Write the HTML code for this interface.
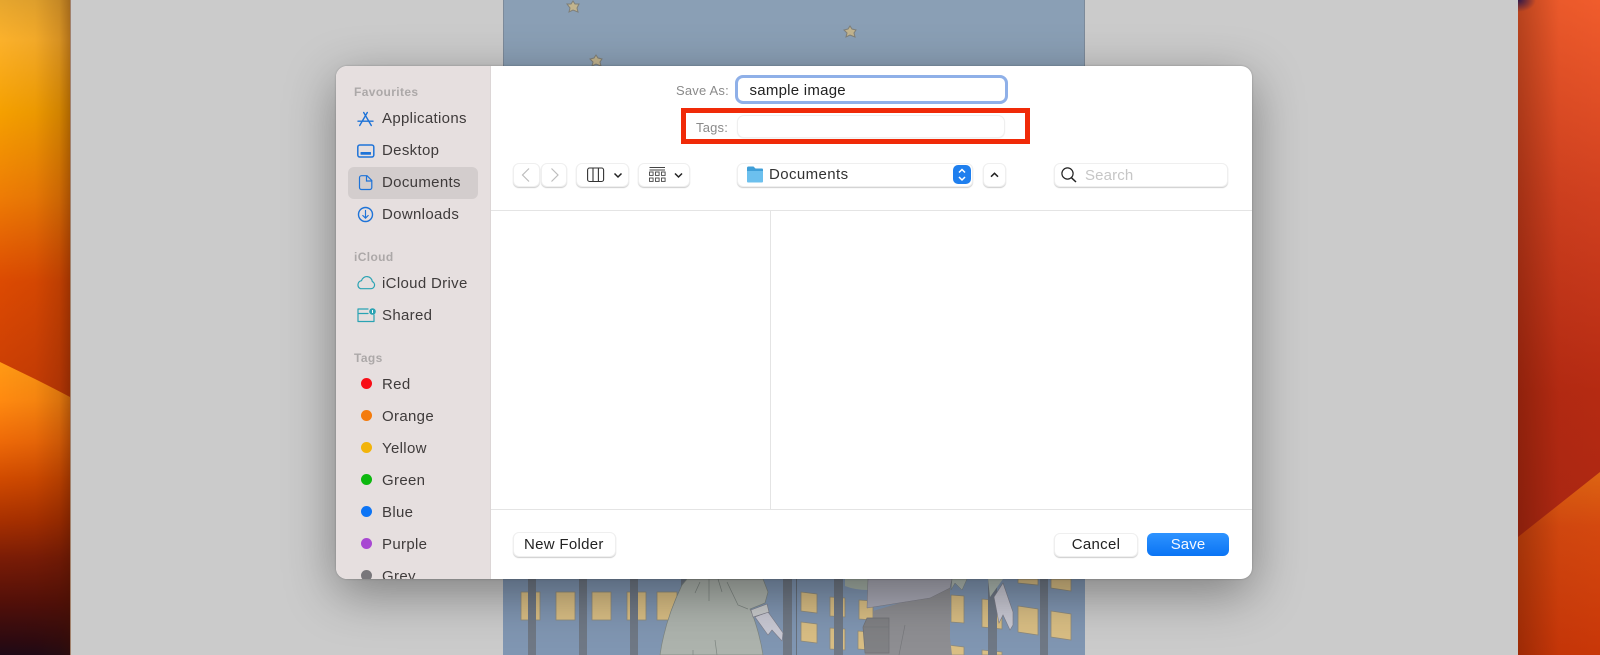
<!DOCTYPE html>
<html><head><meta charset="utf-8"><title>Save dialog</title>
<style>
html,body{margin:0;padding:0;width:1600px;height:655px;overflow:hidden;background:#cbcbcb}
body{position:relative;font-family:"Liberation Sans",sans-serif}
#all{position:absolute;left:0;top:0;width:1600px;height:655px;overflow:hidden;filter:blur(.35px)}
svg.l{position:absolute;left:0;top:0}
.t{position:absolute;white-space:nowrap;font-size:15px;line-height:20px;letter-spacing:.33px;color:#3f3b3b;margin-top:1px}
.h{position:absolute;white-space:nowrap;font-size:12px;line-height:16px;left:354px;font-weight:bold;letter-spacing:.38px;color:#aca8a8}
.s{left:382px}
.b{position:absolute;box-sizing:border-box;background:#fff;border:1px solid #efefef;border-radius:6px;box-shadow:0 1px 1px rgba(0,0,0,.2)}
.d{position:absolute;left:360.5px;width:11px;height:11px;border-radius:50%}
#dlg{position:absolute;left:336px;top:66px;width:916px;height:513px;border-radius:11px;background:#fff;box-shadow:0 14px 50px rgba(0,0,0,.38),0 0 2px rgba(0,0,0,.25)}
#side{position:absolute;left:0;top:0;width:155px;height:513px;background:#e6dfdf;border-radius:11px 0 0 11px;border-right:1px solid #dcd6d6;box-sizing:border-box}
#clip{position:absolute;left:0;top:0;width:1600px;height:579px;overflow:hidden}
</style></head><body><div id="all">
<svg class="l" width="1600" height="655" viewBox="0 0 1600 655">
<defs>
<linearGradient id="lw" gradientUnits="userSpaceOnUse" x1="0" y1="0" x2="0" y2="655"><stop offset="0" stop-color="#e6a62e"/><stop offset=".06" stop-color="#fbb12b"/><stop offset=".17" stop-color="#f5a000"/><stop offset=".3" stop-color="#ee7c05"/><stop offset=".43" stop-color="#dc4a02"/><stop offset=".6" stop-color="#c83c05"/></linearGradient>
<linearGradient id="lw2" gradientUnits="userSpaceOnUse" x1="0" y1="362" x2="0" y2="655"><stop offset="0" stop-color="#ff9a14"/><stop offset=".13" stop-color="#ff8a10"/><stop offset=".27" stop-color="#ee6a08"/><stop offset=".4" stop-color="#d04a00"/><stop offset=".54" stop-color="#a83000"/><stop offset=".67" stop-color="#7a1c06"/><stop offset=".81" stop-color="#551008"/><stop offset=".95" stop-color="#2d0a10"/><stop offset="1" stop-color="#1e0a16"/></linearGradient>
<linearGradient id="edgeL" x1="0" y1="0" x2="1" y2="0"><stop offset="0" stop-color="#401000" stop-opacity="0"/><stop offset=".5" stop-color="#401000" stop-opacity=".05"/><stop offset=".85" stop-color="#401000" stop-opacity=".2"/><stop offset="1" stop-color="#401000" stop-opacity=".4"/></linearGradient>
<linearGradient id="rw" x1="0" y1="0" x2="0" y2="1"><stop offset="0" stop-color="#f05c2c"/><stop offset=".3" stop-color="#d0401f"/><stop offset=".6" stop-color="#b52a12"/><stop offset="1" stop-color="#a42412"/></linearGradient>
<linearGradient id="rw2" gradientUnits="userSpaceOnUse" x1="0" y1="472" x2="0" y2="655"><stop offset="0" stop-color="#dd6412"/><stop offset=".3" stop-color="#d4480f"/><stop offset="1" stop-color="#c83608"/></linearGradient>
<linearGradient id="edgeR" x1="0" y1="0" x2="1" y2="0"><stop offset="0" stop-color="#401000" stop-opacity=".32"/><stop offset=".5" stop-color="#401000" stop-opacity=".03"/><stop offset="1" stop-color="#401000" stop-opacity="0"/></linearGradient>
<radialGradient id="pc" cx="0" cy="0" r="1"><stop offset="0" stop-color="#30184a"/><stop offset="1" stop-color="#30184a" stop-opacity="0"/></radialGradient>
</defs>
<rect x="0" y="0" width="70" height="655" fill="url(#lw)"/>
<path d="M0 362 L35 379 Q55 389 70 397 V655 H0Z" fill="url(#lw2)"/>
<rect x="0" y="0" width="70" height="655" fill="url(#edgeL)"/>
<rect x="70" y="0" width="1" height="655" fill="#7a3a10" opacity=".5"/>
<rect x="1518" y="0" width="82" height="655" fill="url(#rw)"/>
<path d="M1518 537 L1600 472 V655 H1518Z" fill="url(#rw2)"/>
<rect x="1518" y="0" width="82" height="655" fill="url(#edgeR)"/>
<rect x="1518" y="0" width="18" height="12" fill="url(#pc)"/>
<rect x="503" y="0" width="582" height="655" fill="#8a9fb5"/>
<rect x="503" y="0" width="1" height="655" fill="#7c8a9a"/>
<rect x="1084" y="0" width="1" height="655" fill="#7c8a9a"/>
<rect x="503" y="579" width="582" height="76" fill="#8096b2"/>
<g fill="#c2b48e" stroke="#7f7f78" stroke-width="1">
<polygon points="573,1 575,4 579,4 577,8 578,12 573,10 569,12 570,8 567,4 571,4"/>
<polygon points="850,26 852,29 856,30 854,33 855,37 850,35 846,37 847,33 844,30 848,29"/>
<polygon points="596,55 598,58 602,59 600,62 601,66 596,64 592,66 593,62 590,59 594,58"/>
</g>
<g fill="#d9be84" stroke="#8d8a7c" stroke-width=".8">
<rect x="521" y="592" width="19" height="28"/><rect x="556" y="592" width="19" height="28"/><rect x="592" y="592" width="19" height="28"/><rect x="627" y="592" width="19" height="28"/><rect x="657" y="592" width="20" height="28"/>
<polygon points="801,592 817,594 817,613 801,611"/><polygon points="801,622 817,624 817,643 801,641"/>
<polygon points="830,597 845,598 845,617 830,616"/><polygon points="830,628 845,629 845,650 830,649"/>
<polygon points="859,600 873,601 873,620 859,619"/><polygon points="858,631 870,632 870,650 858,649"/>
<polygon points="951,595 964,596 964,623 951,622"/><polygon points="982,599 1002,601 1002,629 982,627"/>
<polygon points="1018,606 1038,609 1038,635 1018,632"/><polygon points="1051,611 1071,614 1071,640 1051,637"/>
<polygon points="1018,579 1038,579 1038,585 1018,583"/><polygon points="1051,579 1071,579 1071,591 1051,588"/>
<polygon points="948,645 964,647 964,655 948,655"/><polygon points="982,650 1002,652 1002,655 982,655"/>
</g>
<g fill="#6f7885">
<rect x="528" y="579" width="8" height="76"/><rect x="579" y="579" width="8" height="76"/><rect x="630" y="579" width="8" height="76"/><rect x="681" y="579" width="7" height="12"/>
<rect x="783" y="579" width="9" height="76"/><rect x="834" y="579" width="9" height="76"/><rect x="988" y="579" width="9" height="76"/><rect x="1040" y="579" width="8" height="76"/>
</g>
<rect x="796" y="579" width="1" height="76" fill="#67707c"/>
<path d="M687 579 L682 585 Q665 620 660 655 H763 Q760 635 752 613 L750 609 L765 603 L768 592 L763 579Z" fill="#adb3ad" stroke="#7d8580" stroke-width=".7"/>
<path d="M700 582 L695 593 M709 579 V601 M718 579 L722 592 M727 582 L738 605 L748 609 M715 640 L717 655 M693 650 V655" stroke="#7d8580" stroke-width=".7" fill="none"/>
<path d="M755 617 L768 612 L783 633 L782 641 L772 630 L768 635Z" fill="#c9c9d4" stroke="#7d7d88" stroke-width=".6"/>
<path d="M751 610 L767 604 L769 612 L753 617Z" fill="#c9cbcc" stroke="#7d7d88" stroke-width=".6"/>
<path d="M845 579 H868 V590 Q855 590 845 586Z" fill="#a5b0a6"/>
<path d="M873 611 L950 588 V638 L952 655 H865 L873 620Z" fill="#8e8e92"/>
<path d="M868 579 L867 608 L930 598 L950 588 L952 579Z" fill="#a9a9b5" stroke="#7d7d88" stroke-width=".5"/>
<path d="M863 627 L867 618 L889 618 L889 653 L865 653Z" fill="#808184" stroke="#6f7074" stroke-width=".7"/>
<path d="M864 627 H889 M905 625 L899 655" stroke="#77787c" stroke-width=".7" fill="none"/>
<path d="M952 579 H967 L962 590 L955 583 L951 590Z" fill="#b0bab3" stroke="#7d8580" stroke-width=".5"/>
<path d="M988 579 H1003 L990 597Z" fill="#b0bbb3"/>
<path d="M994 597 L1003 583 L1013 612 L1013 625 L1010 630 L1003 615 L999 623Z" fill="#c9c9d4" stroke="#7d7d88" stroke-width=".6"/>
</svg>
<div id="dlg"><div id="side"></div></div>
<div id="clip">
<div style="position:absolute;left:348px;top:167px;width:130px;height:32px;border-radius:6px;background:#d3cdcd"></div>
<div class="h" style="top:84px">Favourites</div>
<div class="t s" style="top:108px">Applications</div>
<div class="t s" style="top:140px">Desktop</div>
<div class="t s" style="top:172px">Documents</div>
<div class="t s" style="top:204px">Downloads</div>
<div class="h" style="top:249px">iCloud</div>
<div class="t s" style="top:273px">iCloud Drive</div>
<div class="t s" style="top:305px">Shared</div>
<div class="h" style="top:350px">Tags</div>
<div class="t s" style="top:374px">Red</div>
<div class="t s" style="top:406px">Orange</div>
<div class="t s" style="top:438px">Yellow</div>
<div class="t s" style="top:470px">Green</div>
<div class="t s" style="top:502px">Blue</div>
<div class="t s" style="top:534px">Purple</div>
<div class="t s" style="top:566px">Grey</div>
<div class="d" style="top:378px;background:#f80e17"></div>
<div class="d" style="top:410px;background:#f47b0c"></div>
<div class="d" style="top:442px;background:#f2b40a"></div>
<div class="d" style="top:474px;background:#0db80f"></div>
<div class="d" style="top:506px;background:#0c74f5"></div>
<div class="d" style="top:538px;background:#a848d2"></div>
<div class="d" style="top:570px;background:#78767a"></div>
</div>

<div style="position:absolute;left:491px;top:210px;width:761px;height:1px;background:#e4e4e4"></div>
<div style="position:absolute;left:491px;top:509px;width:761px;height:1px;background:#e4e4e4"></div>
<div style="position:absolute;left:770px;top:210px;width:1px;height:299px;background:#e4e4e4"></div>

<div class="t" style="left:676px;top:81px;font-size:13px;color:#8a8a8a;letter-spacing:.2px;margin-top:0">Save As:</div>
<div style="position:absolute;box-sizing:border-box;left:735px;top:75px;width:273px;height:29px;border:3px solid #8fb0e8;border-radius:8px;background:#fff"></div>
<div class="t" style="left:749.500px;top:80px;color:#222;letter-spacing:.25px">sample image</div>
<div class="t" style="left:696px;top:118px;font-size:13px;color:#8a8a8a;letter-spacing:.2px;margin-top:0">Tags:</div>
<div class="b" style="left:737px;top:115px;width:268px;height:23px;border-radius:7px;box-shadow:0 .5px 1px rgba(0,0,0,.08)"></div>
<div style="position:absolute;box-sizing:border-box;left:681px;top:108px;width:349px;height:36px;border:5px solid #f02a08"></div>

<div class="b" style="left:513px;top:163px;width:27px;height:24px"></div>
<div class="b" style="left:541px;top:163px;width:26px;height:24px"></div>
<div class="b" style="left:576px;top:163px;width:53px;height:24px"></div>
<div class="b" style="left:638px;top:163px;width:52px;height:24px"></div>
<div class="b" style="left:737px;top:163px;width:236px;height:24px"></div>
<div class="b" style="left:983px;top:163px;width:23px;height:24px"></div>
<div class="b" style="left:1054px;top:163px;width:174px;height:24px"></div>
<div style="position:absolute;left:953px;top:165px;width:18px;height:19px;border-radius:5px;background:#1f7fee"></div>
<div class="t" style="left:769px;top:164px;color:#333;letter-spacing:.4px">Documents</div>
<div class="t" style="left:1085px;top:165px;color:#c6c6c6;letter-spacing:.15px">Search</div>

<div class="b" style="left:513px;top:532px;width:103px;height:25px"></div>
<div class="t" style="left:524px;top:534px;color:#222;letter-spacing:.3px">New Folder</div>
<div class="b" style="left:1054px;top:533px;width:84px;height:24px"></div>
<div class="t" style="left:1054px;width:84px;text-align:center;top:534px;color:#222;letter-spacing:.3px">Cancel</div>
<div style="position:absolute;left:1147px;top:533px;width:82px;height:23px;border-radius:6px;background:linear-gradient(#2e93ff,#0a74f4)"></div>
<div class="t" style="left:1147px;width:82px;text-align:center;top:534px;color:#f4f8ff;letter-spacing:.1px">Save</div>

<svg class="l" width="1600" height="655" viewBox="0 0 1600 655" fill="none">
<g stroke="#1e73d8" stroke-width="1.4" stroke-linecap="round">
<path d="M363.700 112.500 L371.300 125.500 M367.300 112.500 L359.700 125.500 M358 121.200 H373"/>
<rect x="357.800" y="145" width="16" height="12" rx="2" stroke-width="1.500"/>
<rect x="360.500" y="152" width="10.500" height="2.800" rx=".5" fill="#1e73d8" stroke="none"/>
<path d="M361.500 175.700 H367 L371.800 180.500 V187.500 A2 2 0 0 1 369.800 189.500 H361.500 A2 2 0 0 1 359.500 187.500 V177.700 A2 2 0 0 1 361.500 175.700 Z M366.500 176 V181 H371.500" stroke-width="1.200"/>
<circle cx="365.500" cy="214.500" r="7"/>
<path d="M365.500 210.500 V218 M362.800 215.500 L365.500 218.200 L368.200 215.500" stroke-width="1.200"/>
</g>
<g stroke="#2aa3b3" stroke-width="1.200" stroke-linecap="round" stroke-linejoin="round">
<path d="M360.500 288.700 H371 A3.700 3.700 0 0 0 372.300 281.600 A5.500 5.500 0 0 0 361.500 280.700 A4.200 4.200 0 0 0 360.500 288.700 Z"/>
<path d="M368 309 H358 V321.500 H374 V315 M358 313.500 H368"/>
<circle cx="372.500" cy="311.500" r="3.300" fill="#2aa3b3" stroke="none"/>
</g>
<rect x="372" y="310" width="1" height="3" fill="#fff"/>
<path d="M529 168.500 L522.500 175 L529 181.500 M551.500 168.500 L558 175 L551.500 181.500" stroke="#bdbdbd" stroke-width="1.200"/>
<rect x="587.600" y="168" width="16" height="13.500" rx="2" stroke="#333" stroke-width="1.100"/>
<path d="M593 168 V181.500 M598.400 168 V181.500" stroke="#333" stroke-width="1.100"/>
<path d="M614.500 173.500 L618 177 L621.500 173.500 M675 173.500 L678.500 177 L682 173.500" stroke="#222" stroke-width="1.500"/>
<path d="M991 176.700 L994.500 173.300 L998 176.700" stroke="#222" stroke-width="1.500"/>
<path d="M649.500 167.500 H665 M649.500 170 H665" stroke="#444" stroke-width="1"/>
<g stroke="#444" stroke-width=".9">
<rect x="649.500" y="172" width="3.600" height="3.400"/><rect x="655.500" y="172" width="3.600" height="3.400"/><rect x="661.500" y="172" width="3.600" height="3.400"/>
<rect x="649.500" y="178" width="3.600" height="3.400"/><rect x="655.500" y="178" width="3.600" height="3.400"/><rect x="661.500" y="178" width="3.600" height="3.400"/>
</g>
<path d="M747 168 A1.500 1.500 0 0 1 748.500 166.500 H753.500 L755.500 168.500 H762 A1 1 0 0 1 763 169.500 V172 H747Z" fill="#3f9fd8"/>
<path d="M747 171 H763 V181.500 A1 1 0 0 1 762 182.500 H748 A1 1 0 0 1 747 181.500Z" fill="#6cc0ee"/>
<path d="M959 172.500 L962 169.500 L965 172.500 M959 177 L962 180 L965 177" stroke="#fff" stroke-width="1.500"/>
<circle cx="1067.500" cy="173.500" r="5.600" stroke="#222" stroke-width="1.200"/>
<path d="M1071.500 177.800 L1076 182" stroke="#222" stroke-width="1.500"/>
</svg>
</div></body></html>
